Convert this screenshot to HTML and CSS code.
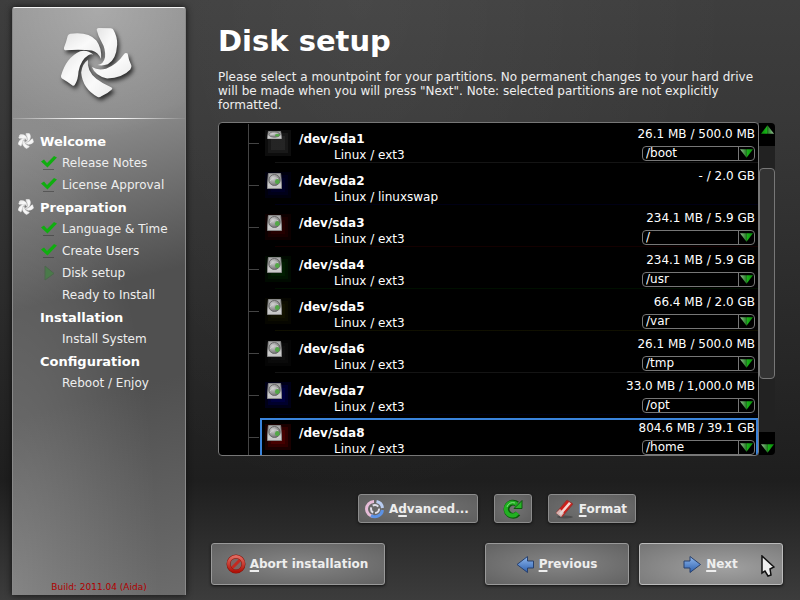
FILE: index.html
```html
<!DOCTYPE html>
<html lang="en">
<head>
    <meta charset="UTF-8">
    <meta name="viewport" content="width=device-width, initial-scale=1.0">
    <title>Disk setup</title>
    <link rel="stylesheet" href="styles.css">
</head>
<body>
    <!-- shared icons -->
    <svg class="defs" width="0" height="0" aria-hidden="true">
        <defs>
            <linearGradient id="petal" x1="0" y1="0" x2="1" y2="1">
                <stop offset="0" stop-color="#e4e4e4"/>
                <stop offset="0.5" stop-color="#fafafa"/>
                <stop offset="1" stop-color="#eaeaea"/>
            </linearGradient>
            <linearGradient id="green-x">
                <stop offset="0" stop-color="#9ac49a"/>
                <stop offset="0.5" stop-color="#1f7a1f"/>
                <stop offset="0.55" stop-color="#18b418"/>
                <stop offset="1" stop-color="#0a8a0a"/>
            </linearGradient>
            <linearGradient id="blue" x1="0" y1="0" x2="0" y2="1">
                <stop offset="0" stop-color="#8fb8ee"/>
                <stop offset="1" stop-color="#2c5fae"/>
            </linearGradient>
            <linearGradient id="red" x1="0" y1="0" x2="0" y2="1">
                <stop offset="0" stop-color="#e06a60"/>
                <stop offset="1" stop-color="#b01208"/>
            </linearGradient>
            <linearGradient id="metal" x1="0" y1="0" x2="0" y2="1">
                <stop offset="0" stop-color="#a8a8a8"/>
                <stop offset="1" stop-color="#d8d8d8"/>
            </linearGradient>
            <radialGradient id="platter" cx="0.35" cy="0.35" r="0.7">
                <stop offset="0" stop-color="#d4d4d4"/>
                <stop offset="1" stop-color="#6c6c6c"/>
            </radialGradient>
        </defs>
        <symbol id="swirl" viewBox="180 80 220 220">
            <g fill="url(#petal)">
                <path d="M289 91Q289 86 295 86L331 87Q337 87 339 92Q351 112 350 136Q347 181 322 194Q306 199 292 196Q310 193 314 172Q316 148 304 128Q293 110 289 91Z"/>
                <path d="M211 103Q264 96 288 123Q305 145 302 178Q294 159 275 153Q244 149 195 152Q190 150 192 144Q198 130 203 109Q205 104 211 103Z"/>
                <path d="M279 165Q262 150 240 155Q198 174 183 228Q182 233 186 236Q200 244 217 257Q222 259 225 253Q234 238 235 215Q242 180 264 167Q271 163 279 165Z"/>
                <path d="M263 181Q246 192 243 218Q247 266 292 291Q298 293 303 289Q322 281 334 269Q338 265 332 262Q307 252 288 237Q259 213 263 181Z"/>
                <path d="M275 202Q292 213 317 207Q350 194 370 164Q375 158 381 162Q384 181 392 197Q394 204 389 209Q366 234 320 236Q285 229 275 202Z"/>
            </g>
        </symbol>
        <symbol id="check" viewBox="0 0 16 16">
            <path d="M2 14.500h11" stroke="#222" stroke-width="1" opacity=".4"/>
            <path d="M0 6.500L3 4.500L6 8L13 1L16 2.500L6.500 12.500Z" fill="#0fae0f"/>
        </symbol>
        <symbol id="down" viewBox="0 0 12 8">
            <path d="M0 0H12L6 8Z" fill="url(#green-x)"/>
        </symbol>
        <symbol id="drive" viewBox="0 0 16 16" preserveAspectRatio="none">
            <path d="M1.500 0.500H14.500L15.500 12V15.500H.5V12Z" fill="url(#metal)" stroke="#888"/>
            <path d="M1 13H15V15H1Z" fill="#c8c8c8"/>
            <ellipse cx="8" cy="7" rx="6" ry="5.500" fill="url(#platter)" stroke="#666"/>
            <path d="M3 8Q8 3 12 6" stroke="#ccc" fill="none"/>
            <circle cx="11" cy="8.500" r="2.500" fill="#52a846"/>
        </symbol>
    </svg>

    <aside class="sidebar">
        <div class="brand">
            <svg class="logo"><use href="#swirl"/></svg>
        </div>
        <nav class="steps">
            <h2><svg class="mark"><use href="#swirl"/></svg>Welcome</h2>
            <ul>
                <li><svg><use href="#check"/></svg>Release Notes</li>
                <li><svg><use href="#check"/></svg>License Approval</li>
            </ul>
            <h2><svg class="mark"><use href="#swirl"/></svg>Preparation</h2>
            <ul>
                <li><svg><use href="#check"/></svg>Language &amp; Time</li>
                <li><svg><use href="#check"/></svg>Create Users</li>
                <li><svg viewBox="0 0 16 16"><path d="M4 1L13 8.500L4 15Z" fill="#4a7a4a" stroke="#4c664c"/></svg>Disk setup</li>
                <li>Ready to Install</li>
            </ul>
            <h2>Installation</h2>
            <ul>
                <li>Install System</li>
            </ul>
            <h2>Configuration</h2>
            <ul>
                <li>Reboot / Enjoy</li>
            </ul>
        </nav>
        <p class="build">Build: 2011.04 (Aida)</p>
    </aside>

    <main>
        <h1>Disk setup</h1>
        <p class="intro">Please select a mountpoint for your partitions. No permanent changes to your hard drive will be made when you will press "Next". Note: selected partitions are not explicitly formatted.</p>

        <div class="disk-box">
            <ul class="partitions">
                <li class="partition gray mounting">
                    <div class="row">
                        <span class="glow"><svg><use href="#drive"/></svg></span>
                        <div class="info"><strong>/dev/sda1</strong><span>Linux / ext3</span></div>
                        <div class="usage">
                            <span>26.1 MB / 500.0 MB</span>
                            <div class="mount"><select aria-label="Mountpoint for sda1"><option>/boot</option></select><svg><use href="#down"/></svg></div>
                        </div>
                    </div>
                </li>
                <li class="partition blue">
                    <div class="row">
                        <span class="glow"><svg><use href="#drive"/></svg></span>
                        <div class="info"><strong>/dev/sda2</strong><span>Linux / linuxswap</span></div>
                        <div class="usage"><span>- / 2.0 GB</span></div>
                    </div>
                </li>
                <li class="partition red">
                    <div class="row">
                        <span class="glow"><svg><use href="#drive"/></svg></span>
                        <div class="info"><strong>/dev/sda3</strong><span>Linux / ext3</span></div>
                        <div class="usage">
                            <span>234.1 MB / 5.9 GB</span>
                            <div class="mount"><select aria-label="Mountpoint for sda3"><option>/</option></select><svg><use href="#down"/></svg></div>
                        </div>
                    </div>
                </li>
                <li class="partition green">
                    <div class="row">
                        <span class="glow"><svg><use href="#drive"/></svg></span>
                        <div class="info"><strong>/dev/sda4</strong><span>Linux / ext3</span></div>
                        <div class="usage">
                            <span>234.1 MB / 5.9 GB</span>
                            <div class="mount"><select aria-label="Mountpoint for sda4"><option>/usr</option></select><svg><use href="#down"/></svg></div>
                        </div>
                    </div>
                </li>
                <li class="partition yellow">
                    <div class="row">
                        <span class="glow"><svg><use href="#drive"/></svg></span>
                        <div class="info"><strong>/dev/sda5</strong><span>Linux / ext3</span></div>
                        <div class="usage">
                            <span>66.4 MB / 2.0 GB</span>
                            <div class="mount"><select aria-label="Mountpoint for sda5"><option>/var</option></select><svg><use href="#down"/></svg></div>
                        </div>
                    </div>
                </li>
                <li class="partition">
                    <div class="row">
                        <span class="glow"><svg><use href="#drive"/></svg></span>
                        <div class="info"><strong>/dev/sda6</strong><span>Linux / ext3</span></div>
                        <div class="usage">
                            <span>26.1 MB / 500.0 MB</span>
                            <div class="mount"><select aria-label="Mountpoint for sda6"><option>/tmp</option></select><svg><use href="#down"/></svg></div>
                        </div>
                    </div>
                </li>
                <li class="partition blue-strong">
                    <div class="row">
                        <span class="glow"><svg><use href="#drive"/></svg></span>
                        <div class="info"><strong>/dev/sda7</strong><span>Linux / ext3</span></div>
                        <div class="usage">
                            <span>33.0 MB / 1,000.0 MB</span>
                            <div class="mount"><select aria-label="Mountpoint for sda7"><option>/opt</option></select><svg><use href="#down"/></svg></div>
                        </div>
                    </div>
                </li>
                <li class="partition red-strong selected">
                    <div class="row">
                        <span class="glow"><svg><use href="#drive"/></svg></span>
                        <div class="info"><strong>/dev/sda8</strong><span>Linux / ext3</span></div>
                        <div class="usage">
                            <span>804.6 MB / 39.1 GB</span>
                            <div class="mount"><select aria-label="Mountpoint for sda8"><option>/home</option></select><svg><use href="#down"/></svg></div>
                        </div>
                    </div>
                </li>
            </ul>
            <div class="scrollbar">
                <button type="button" class="scroll-up" aria-label="Scroll up"><svg><use href="#down"/></svg></button>
                <div class="track"><div class="thumb"></div></div>
                <button type="button" class="scroll-down" aria-label="Scroll down"><svg><use href="#down"/></svg></button>
            </div>
        </div>

        <div class="tools">
            <button type="button" class="btn">
                <svg viewBox="0 0 20 20" fill="none">
                    <path d="M9 17.500A7.500 7.500 0 0 1 9 2.500" stroke="#e6bcd8" stroke-width="3"/>
                    <path d="M17.500 11A7.500 7.500 0 0 1 6 16.400" stroke="#5c92e4" stroke-width="3"/>
                    <path d="M11.500 2.500A7.500 7.500 0 0 1 17.500 9" stroke="#b8ccf0" stroke-width="3"/>
                    <circle cx="10" cy="10" r="4" stroke="#e0e0ea" stroke-width="2" stroke-dasharray="6 2"/>
                </svg>
                <span>A<u>d</u>vanced...</span>
            </button>
            <button type="button" class="btn" aria-label="Refresh">
                <svg viewBox="0 0 20 20">
                    <path d="M15 14.500A6.500 6.500 0 1 1 14 5" fill="none" stroke="#0b5a0b" stroke-width="6"/>
                    <path d="M11 9.500H19V1.500Z" fill="#28b428" stroke="#0b5a0b"/>
                    <path d="M14.500 14A6.500 6.500 0 1 1 14 5.500" fill="none" stroke="#22b022" stroke-width="4"/>
                    <path d="M4 8A6 6 0 0 1 12 4" fill="none" stroke="#7cdc7c" stroke-width="1"/>
                </svg>
            </button>
            <button type="button" class="btn">
                <svg viewBox="0 0 20 20">
                    <ellipse cx="10" cy="18" rx="8" ry="1.500" fill="#333" opacity=".5"/>
                    <path d="M12 1L18 5L7 18L1 14Z" fill="#cc1f1a" stroke="#8c3a36"/>
                    <path d="M14 3L16 4.500L6 16L4 14.500Z" fill="#f6d4d0"/>
                    <path d="M5 10L1 14L6 18L9 14Z" fill="#dcd4d2" opacity=".8"/>
                </svg>
                <span><u>F</u>ormat</span>
            </button>
        </div>

        <div class="wizard-nav">
            <button type="button" class="btn large abort">
                <svg viewBox="0 0 20 20">
                    <circle cx="10" cy="10" r="8" fill="#7c6664"/>
                    <path d="M5 15L15 5" stroke="#c42a20" stroke-width="3"/>
                    <circle cx="10" cy="10" r="7.500" fill="none" stroke="#8c1208" stroke-width="4"/>
                    <circle cx="10" cy="10" r="7.500" fill="none" stroke="url(#red)" stroke-width="3"/>
                </svg>
                <span><u>A</u>bort installation</span>
            </button>
            <button type="button" class="btn large">
                <svg viewBox="0 0 20 20"><path d="M2 10.500L12.500 2.500V7H18.500V14H12.500V18.500Z" fill="url(#blue)" stroke="#28406c"/></svg>
                <span><u>P</u>revious</span>
            </button>
            <button type="button" class="btn large next">
                <svg viewBox="0 0 20 20"><path d="M18.500 10.500L8 2.500V7H2V14H8V18.500Z" fill="url(#blue)" stroke="#28406c"/></svg>
                <span><u>N</u>ext</span>
                <svg class="cursor" viewBox="0 0 14 22"><path d="M1 1V18L4 16L7 21L10 20L9 14L13 12Z" fill="#eee" stroke="#111" stroke-width="1.500"/></svg>
            </button>
        </div>
    </main>
</body>
</html>
```
FILE: styles.css
```css
* {
    margin: 0;
    padding: 0;
    box-sizing: border-box;
    font-family: "DejaVu Sans", sans-serif;
}

body {
    display: flex;
    height: 100vh;
    min-height: 560px;
    padding: 7px 17px 5px 12px;
    gap: 25px;
    font-size: 12px;
    color: #eee;
    background:
        radial-gradient(ellipse at 45% 0, rgba(255,255,255,0.05), transparent 60%),
        linear-gradient(#3e3e3e, #383838 20%, #1e1e1e 80%, #3c3c3c);
}

ul {
    list-style: none;
}

.defs {
    position: absolute;
}

/* sidebar */
.sidebar {
    display: flex;
    flex-direction: column;
    flex: none;
    width: 174px;
    border: 1px solid #888;
    border-top-color: #f4f4f4;
    border-bottom: none;
    border-radius: 3px 3px 0 0;
    background:
        radial-gradient(circle at 50% 0, rgba(255,255,255,0.22), transparent 130px),
        radial-gradient(ellipse at 0 100%, rgba(255,255,255,0.2), transparent 60%),
        linear-gradient(165deg, #949494, #8a8a8a 22%, #505050 48%, #505050 65%, #6c6c6c);
    box-shadow: 0 0 6px #111;
}

.brand {
    display: flex;
    justify-content: center;
    height: 111px;
    padding: 18px 4px 0 0;
    border-bottom: 1px solid;
    border-image: linear-gradient(90deg, #999, #fff 40%, #fff 60%, #888) 1;
}

.logo {
    width: 74px;
    height: 74px;
    filter: drop-shadow(2px 3px 2px rgba(0,0,0,0.7));
}

.steps {
    flex: 1;
    padding-top: 11px;
}

.steps h2 {
    display: flex;
    align-items: center;
    position: relative;
    height: 22px;
    padding-left: 27px;
    font-size: 13px;
    color: #fff;
}

.steps li {
    display: flex;
    align-items: center;
    position: relative;
    height: 22px;
    padding-left: 49px;
    font-size: 12px;
}

.steps svg {
    position: absolute;
    left: 28px;
    width: 16px;
    height: 16px;
}

.steps .mark {
    left: 5px;
    stroke: #eee;
    stroke-width: 8px;
}

.build {
    padding-bottom: 3px;
    font-size: 9px;
    text-align: center;
    color: #b00000;
}

/* main column */
main {
    display: flex;
    flex-direction: column;
    flex: 1;
    min-width: 0;
    padding-bottom: 10px;
}

h1 {
    margin: 14px 7px 0;
    font-size: 29px;
    line-height: 40px;
    color: #fff;
}

.intro {
    margin: 9px 7px 0;
    line-height: 14px;
}

.disk-box {
    display: flex;
    flex: 1;
    min-height: 0;
    margin: 10px 8px 0 7px;
}

.partitions {
    flex: 1;
    overflow: hidden;
    padding: 1px 0 0 29px;
    border: 1px solid #777;
    border-radius: 4px;
    background: #000;
}

.partition {
    --glow: 255, 255, 255;
    --power: 0.02;
    position: relative;
    height: 42px;
    padding-left: 12px;
    border-left: 1px solid #444;
}

/* branch of the tree */
.partition::before {
    content: "";
    position: absolute;
    top: 19px;
    left: 0;
    width: 10px;
    border-top: 1px solid #444;
}

.gray { --power: 0.05; }
.blue { --glow: 0, 0, 255; --power: 0.05; }
.red { --glow: 255, 0, 0; --power: 0.05; }
.green { --glow: 0, 200, 0; --power: 0.05; }
.yellow { --glow: 200, 200, 0; --power: 0.03; }
.blue-strong { --glow: 0, 0, 255; --power: 0.09; }
.red-strong { --glow: 255, 0, 0; --power: 0.1; }

.row {
    display: flex;
    height: 42px;
    padding: 0 3px 0 4px;
    border-bottom: 3px solid transparent;
    background: linear-gradient(rgba(var(--glow), 0.08), rgba(var(--glow), 0.08)) 14px 38px / 100% 1px no-repeat;
}

.glow {
    flex: none;
    width: 26px;
    height: 26px;
    margin-top: 6px;
    padding: 1px 2px;
    background:
        linear-gradient(rgba(var(--glow), var(--power)), rgba(var(--glow), var(--power))) 6px 6px / 14px 14px no-repeat,
        linear-gradient(rgba(var(--glow), var(--power)), rgba(var(--glow), var(--power))) 3px 3px / 20px 20px no-repeat,
        rgba(var(--glow), var(--power));
}

.glow svg {
    display: block;
    width: 15px;
    height: 16px;
}

.mounting .glow svg {
    height: 8px;
}

.info {
    flex: 1;
    padding: 7px 0 0 8px;
    line-height: 16px;
    color: #fff;
}

.info strong,
.info span {
    display: block;
}

.info span {
    padding-left: 35px;
}

.usage {
    width: 150px;
    padding-top: 2px;
    text-align: right;
    line-height: 16px;
    color: #fff;
}

.usage > span {
    display: block;
}

.mount {
    position: relative;
    width: 113px;
    margin: 4px 0 0 auto;
}

.mount select {
    display: block;
    width: 100%;
    height: 15px;
    padding-left: 3px;
    appearance: none;
    border: 1px solid #777;
    border-radius: 4px;
    background: linear-gradient(#777, #777) 95px 0 / 1px 100% no-repeat #000;
    font-size: 12px;
    line-height: 13px;
    color: #fff;
}

.mount svg {
    position: absolute;
    top: 3px;
    right: 2px;
    width: 13px;
    height: 9px;
    pointer-events: none;
}

.selected .row {
    margin-left: -1px;
    padding: 0 1px 0 3px;
    border: 2px solid #3a84dc;
}

.selected .glow {
    margin-top: 4px;
}

.selected .info {
    padding-top: 5px;
}

.selected .usage {
    padding-top: 0;
}

.scrollbar {
    display: flex;
    flex-direction: column;
    width: 16px;
    margin: 1px 0;
}

.scrollbar button {
    display: flex;
    justify-content: center;
    height: 23px;
    padding: 2px 0 2px 1px;
    border: none;
    background: #000;
}

.scrollbar svg {
    width: 13px;
    height: 9px;
}

.scrollbar .scroll-up {
    align-items: flex-start;
    border-radius: 0 4px 0 0;
}

.scroll-up svg {
    transform: rotate(180deg);
}

.scrollbar .scroll-down {
    align-items: flex-end;
    border-radius: 0 0 4px 0;
}

.track {
    flex: 1;
    padding-top: 22px;
    background: #222;
}

.thumb {
    height: 80%;
    border: 1px solid #777;
    border-radius: 4px;
    background: #333;
}

/* buttons */
.tools {
    display: flex;
    justify-content: center;
    gap: 16px;
    margin-top: 38px;
}

.wizard-nav {
    display: flex;
    gap: 10px;
    margin-top: 20px;
}

.btn {
    display: flex;
    justify-content: center;
    align-items: center;
    gap: 4px;
    position: relative;
    height: 29px;
    padding: 0 8px 0 6px;
    border: 1px solid #8c8c8c;
    border-radius: 3px;
    background: radial-gradient(ellipse at 50% 50%, #737373, #5e5e5e);
    box-shadow: 0 1px 3px #111;
    font-size: 12px;
    font-weight: bold;
    color: #eee;
}

.btn svg {
    width: 20px;
    height: 20px;
}

.tools .btn[aria-label] {
    padding: 0 8px;
}

.btn u {
    text-decoration-thickness: 2px;
    text-underline-offset: 2px;
}

.large {
    width: 144px;
    height: 42px;
    background: radial-gradient(ellipse at 50% 50%, #858585, #626262);
    border-color: #999;
}

.abort {
    width: 174px;
    margin-right: auto;
}

.next {
    border-color: #bbb;
    background: radial-gradient(ellipse at 60% 60%, #a0a0a0, #757575);
}

.btn .cursor {
    position: absolute;
    top: 11px;
    right: 7px;
    width: 14px;
    height: 22px;
}
```
